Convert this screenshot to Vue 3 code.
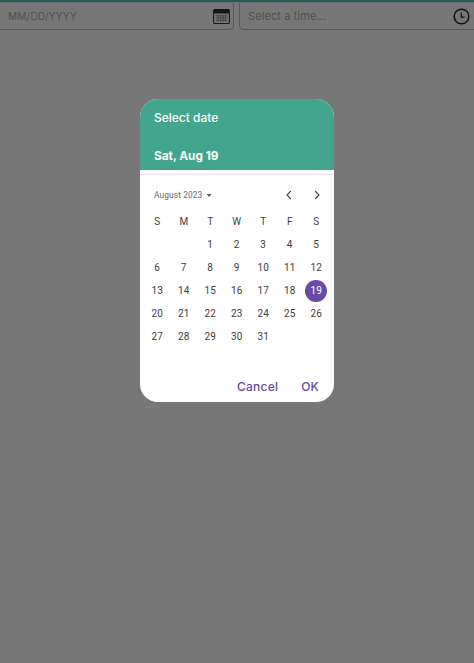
<script setup>
const weekdays = ['S', 'M', 'T', 'W', 'T', 'F', 'S']
const days = [null, null, ...Array.from({ length: 31 }, (_, i) => i + 1)]
</script>

<template>
  <div class="page">
    <div class="top-strip"></div>
    <div class="fields">
      <div class="field field-date">
        <span class="placeholder date-text">MM/DD/YYYY</span>
        <svg class="cal-icon" width="17" height="15" viewBox="0 0 18 16">
          <rect x="0.6" y="0.6" width="16.8" height="14.8" rx="1.4" fill="none" stroke="#141414" stroke-width="1.1" />
          <rect x="0.6" y="0.6" width="16.8" height="4.2" fill="#141414" />
          <path d="M3 7.2h12M3 9.6h12M3 12h12M5.2 6v7.5M8 6v7.5M10.8 6v7.5M13.4 6v7.5" stroke="#333" stroke-width="0.7" fill="none" />
        </svg>
      </div>
      <div class="field field-time">
        <span class="placeholder">Select a time...</span>
        <svg class="clock-icon" width="17" height="17" viewBox="0 0 17 17">
          <circle cx="8.5" cy="8.5" r="7.3" fill="none" stroke="#111" stroke-width="1.5" />
          <path d="M8.3 4.6v4.5h3.3" fill="none" stroke="#111" stroke-width="1.3" />
        </svg>
      </div>
    </div>

    <div class="dialog">
      <header class="head">
        <div class="head-title">Select date</div>
        <div class="head-date">Sat, Aug 19</div>
      </header>
      <div class="body">
        <div class="month-row">
          <div class="month-label">
            <span>August 2023</span>
            <svg width="6" height="3" viewBox="0 0 7 4"><path d="M0 0h7L3.5 4z" fill="#666" /></svg>
          </div>
          <div class="nav">
            <svg width="8" height="10" viewBox="0 0 8 10"><path d="M5.8 1 2 5l3.8 4" fill="none" stroke="#444" stroke-width="1.1" /></svg>
            <svg width="8" height="10" viewBox="0 0 8 10"><path d="M2.2 1 6 5 2.2 9" fill="none" stroke="#444" stroke-width="1.1" /></svg>
          </div>
        </div>
        <div class="weekdays">
          <span v-for="(w, i) in weekdays" :key="i">{{ w }}</span>
        </div>
        <div class="days">
          <span v-for="(d, i) in days" :key="i" class="day" :class="{ selected: d === 19 }">{{ d }}</span>
        </div>
        <div class="actions">
          <span class="btn">Cancel</span>
          <span class="btn">OK</span>
        </div>
      </div>
    </div>
  </div>
</template>

<style>
html, body { margin: 0; padding: 0; }
</style>

<style scoped>
.page {
  position: relative;
  width: 474px;
  height: 663px;
  overflow: hidden;
  background: #777777;
  font-family: Inter, "Noto Sans", sans-serif;
}
.top-strip {
  height: 2px;
  background: #1f5e56;
}
.fields {
  display: flex;
  gap: 5px;
  margin-left: -4px;
  margin-right: -4px;
}
.field {
  height: 28px;
  box-sizing: border-box;
  border: 1px solid #5a5a5a;
  border-top-color: #6d6d6d;
  border-radius: 0 0 5px 5px;
  display: flex;
  align-items: center;
  justify-content: space-between;
}
.field-date {
  width: 238px;
  padding: 0 3px 0 11px;
}
.field-time {
  flex: 1;
  padding: 0 7px 0 8px;
}
.placeholder {
  font-size: 11px;
  color: #505050;
  letter-spacing: 0.1px;
}
.date-text {
  font-size: 10.2px;
}
.dialog {
  position: absolute;
  left: 140px;
  top: 99px;
  width: 194px;
  height: 303px;
  border-radius: 18px;
  overflow: hidden;
  background: #ffffff;
  display: flex;
  flex-direction: column;
}
.head {
  height: 71px;
  box-sizing: border-box;
  background: #43a58e;
  color: #ffffff;
  padding: 11px 14px 0;
  display: flex;
  flex-direction: column;
  gap: 23px;
}
.head-title {
  font-size: 12px;
  line-height: 15px;
  font-weight: 500;
}
.head-date {
  font-size: 11.8px;
  line-height: 16px;
  font-weight: 700;
}
.body {
  flex: 1;
  display: flex;
  flex-direction: column;
  margin-top: 4px;
  border-top: 1px solid #ecdfe6;
}
.month-row {
  display: flex;
  justify-content: space-between;
  align-items: center;
  height: 20px;
  padding: 10px 13px 0 14px;
}
.month-label {
  display: flex;
  align-items: center;
  gap: 4px;
  font-family: Roboto, sans-serif;
  font-size: 8.4px;
  color: #6a6a6a;
  letter-spacing: 0.1px;
}
.nav {
  display: flex;
  gap: 20px;
}
.weekdays,
.days {
  display: grid;
  grid-template-columns: repeat(7, 26.5px);
  margin-left: 4px;
  font-family: Roboto, sans-serif;
  color: #3d3d3d;
  font-size: 10px;
  text-align: center;
}
.weekdays {
  margin-top: 5px;
  height: 23px;
  line-height: 23px;
}
.days {
  grid-auto-rows: 23px;
}
.day {
  display: flex;
  align-items: center;
  justify-content: center;
  letter-spacing: 0.2px;
}
.selected {
  width: 22px;
  height: 22px;
  justify-self: center;
  align-self: center;
  border-radius: 50%;
  background: #6a4aa8;
  color: #ffffff;
}
.actions {
  margin-top: auto;
  display: flex;
  justify-content: flex-end;
  gap: 23px;
  padding: 0 15px 8px 0;
}
.btn {
  font-size: 12px;
  line-height: 15px;
  font-weight: 500;
  letter-spacing: 0.2px;
  color: #65499c;
}
</style>
